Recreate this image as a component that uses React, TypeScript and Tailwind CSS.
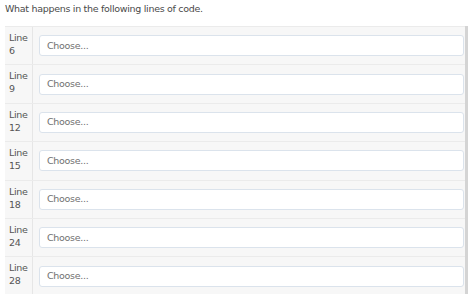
const lines = [6, 9, 12, 15, 18, 24, 28];

export default function App() {
  return (
    <div className="h-[294px] overflow-hidden bg-white font-['DejaVu_Sans',sans-serif] text-[9.5px] tracking-[-0.3px] text-[#555]">
      <p className="pl-[5px] pt-[2px] leading-[14px] text-[#4a4a4a]">
        What happens in the following lines of code.
      </p>
      <div className="ml-[5px] mt-[10px] w-[463px] border-r-[3px] border-[#d4d4d4] bg-[#f7f7f7]">
        {lines.map((n) => (
          <div key={n} className="flex h-[38.4px] border-t border-[#ebebeb]">
            <div className="w-[28px] shrink-0 border-r border-[#e6e6e6] pl-[4px] pt-[4px] leading-[13px] text-[#555]">
              Line
              <br />
              {n}
            </div>
            <div className="flex flex-1 items-center pl-[6px] pr-[1px]">
              <div className="flex h-[21px] w-full items-center rounded-[3px] border border-[#dbe3ec] bg-white pl-[7px] text-[#707070]">
                Choose...
              </div>
            </div>
          </div>
        ))}
      </div>
    </div>
  );
}
